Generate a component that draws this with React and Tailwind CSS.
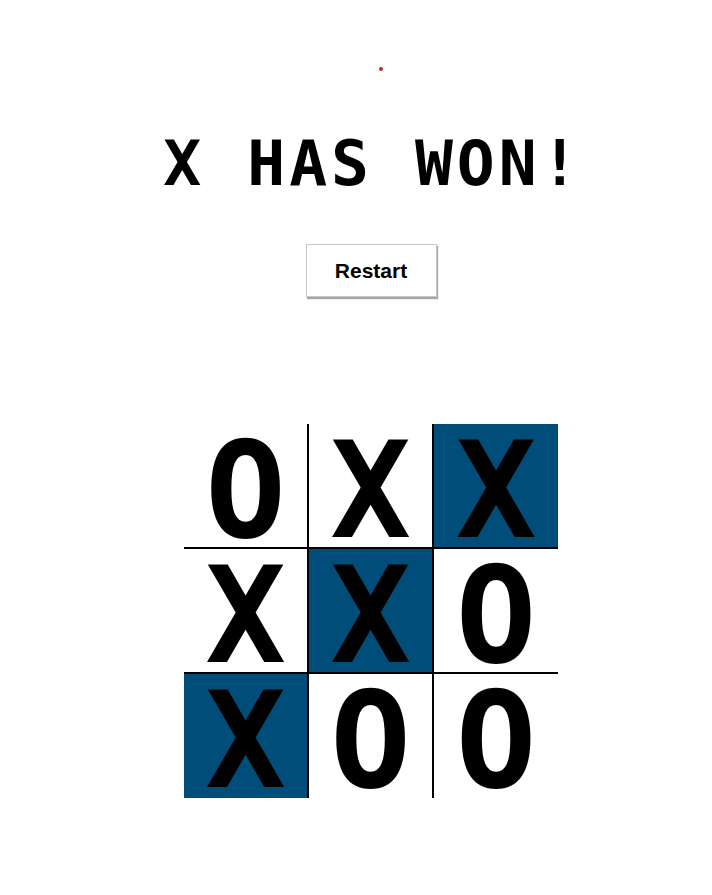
import React, { useState } from "react";

const WIN_LINES = [
  [0, 1, 2],
  [3, 4, 5],
  [6, 7, 8],
  [0, 3, 6],
  [1, 4, 7],
  [2, 5, 8],
  [0, 4, 8],
  [2, 4, 6],
];

const START = ["O", "X", "X", "X", "X", "O", "X", "O", "O"];

const findWinner = (board) => {
  for (const line of WIN_LINES) {
    const [a, b, c] = line;
    if (board[a] && board[a] === board[b] && board[a] === board[c]) {
      return { player: board[a], line };
    }
  }
  return null;
};

const cellBorders = [
  "border-r-2 border-b-2",
  "border-r-2 border-b-2",
  "border-b-2",
  "border-r-2 border-b-2",
  "border-r-2 border-b-2",
  "border-b-2",
  "border-r-2",
  "border-r-2",
  "",
];

const App = () => {
  const [board, setBoard] = useState(START);
  const [turn, setTurn] = useState("X");

  const win = findWinner(board);

  const play = (i) => {
    if (board[i] || win) return;
    const next = [...board];
    next[i] = turn;
    setBoard(next);
    setTurn(turn === "X" ? "O" : "X");
  };

  const restart = () => {
    setBoard(Array(9).fill(""));
    setTurn("X");
  };

  return (
    <div className="min-h-[895px] bg-white pl-[30px] flex flex-col items-center font-['DejaVu_Sans_Mono',monospace]">
      <div className="mt-[67px] ml-[20px] w-[4px] h-[4px] rounded-full bg-[#c0282d]" />

      <h1 className="mt-[61px] ml-[4px] text-[63px] font-bold leading-none tracking-[4px] text-black">
        {win ? `${win.player} HAS WON!` : `${turn}'S TURN`}
      </h1>

      <button
        onClick={restart}
        className="mt-[49px] w-[131px] h-[53px] bg-white border border-[#c8c8c8] shadow-[1px_2px_1px_rgba(0,0,0,0.35)] font-['Liberation_Sans',Arial,sans-serif] font-bold text-[21px] text-black"
      >
        Restart
      </button>

      <div className="mt-[127px] grid grid-cols-[125px_125px_124px] grid-rows-[125px_125px_124px]">
        {board.map((v, i) => (
          <button
            key={i}
            onClick={() => play(i)}
            className={`${cellBorders[i]} border-black flex items-center justify-center pt-[10px] text-[134px] font-bold leading-[108px] text-black ${
              win && win.line.includes(i) ? "bg-[#004d7a]" : "bg-white"
            }`}
          >
            {v}
          </button>
        ))}
      </div>
    </div>
  );
};

export default App;
